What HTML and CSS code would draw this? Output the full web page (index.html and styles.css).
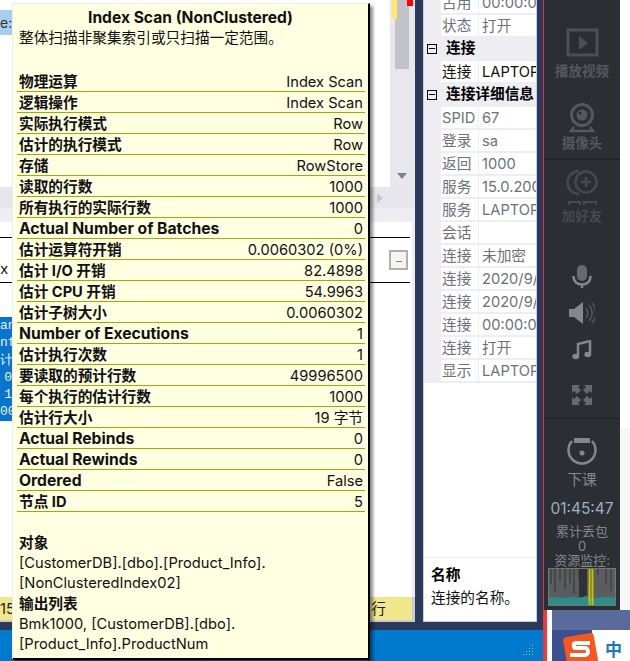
FILE: index.html
```html
<!DOCTYPE html>
<html lang="zh">
<head>
<meta charset="utf-8">
<title>Index Scan</title>
<link rel="stylesheet" href="styles.css">
</head>
<body>
<div class="desk">
  <main class="editor">
    <div class="code">
      <div class="code-main"><div class="tab-stub">e:</div></div>
      <div class="vscroll"><i class="mark-y"></i><i class="mark-r"></i><i class="thumb"></i><i class="arrow-d"></i></div>
    </div>
    <div class="hscroll"><i class="arrow-r"></i></div>
    <div class="gap-band"></div>
    <div class="results">
      <div class="res-head"><span class="res-x">x</span><span class="min-btn"><i></i></span></div>
      <div class="res-spacer"></div>
      <div class="sel"><div>an</div><div>nf</div><div>计</div><div class="r">0</div><div class="r">1</div><div>00</div></div>
    </div>
    <div class="status-y"><span>15</span><span>行</span></div>
    <div class="navy-band"></div>
    <div class="blue-band"></div>
  </main>

  <aside class="props">
    <div class="props-box">
      <div class="grid">
        <div class="pl">占用</div><div class="pv">00:00:00</div>
        <div class="pl">状态</div><div class="pv">打开</div>
        <div class="ph"><i class="tog"></i>连接</div>
        <div class="pl dark">连接</div><div class="pv dark">LAPTOP-</div>
        <div class="ph"><i class="tog"></i>连接详细信息</div>
        <div class="pl">SPID</div><div class="pv">67</div>
        <div class="pl">登录</div><div class="pv">sa</div>
        <div class="pl">返回</div><div class="pv">1000</div>
        <div class="pl">服务</div><div class="pv">15.0.2000</div>
        <div class="pl">服务</div><div class="pv">LAPTOP-</div>
        <div class="pl">会话</div><div class="pv"></div>
        <div class="pl">连接</div><div class="pv">未加密</div>
        <div class="pl">连接</div><div class="pv">2020/9/</div>
        <div class="pl">连接</div><div class="pv">2020/9/</div>
        <div class="pl">连接</div><div class="pv">00:00:00</div>
        <div class="pl">连接</div><div class="pv">打开</div>
        <div class="pl">显示</div><div class="pv">LAPTOP-</div>
      </div>
      <div class="desc"><b>名称</b><span>连接的名称。</span></div>
    </div>
    <div class="navy-band"></div>
    <div class="blue-band"><svg class="grip" width="12" height="12" viewBox="0 0 12 12"><path d="M9 1h1v1H9zM6 4h1v1H6zM9 4h1v1H9zM3 7h1v1H3zM6 7h1v1H6zM9 7h1v1H9zM0 10h1v1H0zM3 10h1v1H3zM6 10h1v1H6zM9 10h1v1H9z" fill="#9cc4e6"/></svg></div>
  </aside>
  <div class="red-line"></div>

  <div class="right">
    <nav class="side">
      <div class="s-top"></div>
      <div class="s-item s-play">
        <svg width="33" height="30" viewBox="0 0 33 30"><rect x="2" y="2" width="29" height="25" fill="none" stroke="#4c4f53" stroke-width="3"/><path d="M13 8l9 7-9 7z" fill="#4c4f53"/></svg>
        <span>播放视频</span>
      </div>
      <div class="s-item s-cam">
        <svg width="28" height="30" viewBox="0 0 28 30"><circle cx="14" cy="12" r="10.500" fill="none" stroke="#55585c" stroke-width="3"/><circle cx="14" cy="12" r="5.500" fill="#55585c"/><circle cx="12" cy="10" r="1.500" fill="#2b2e33"/><path d="M6 24l-3 4h22l-3-4" fill="none" stroke="#55585c" stroke-width="2.500"/></svg>
        <span>摄像头</span>
      </div>
      <div class="s-item s-add">
        <svg width="34" height="38" viewBox="0 0 34 38"><path d="M14 2a11.500 11.500 0 0 0 0 23" fill="none" stroke="#46494d" stroke-width="2.500"/><circle cx="21" cy="13" r="10.500" fill="none" stroke="#46494d" stroke-width="2.500"/><path d="M21 8v10M16 13h10" stroke="#46494d" stroke-width="2.500"/><path d="M4 36v-3h11v3M19 36v-3h12v3" fill="none" stroke="#46494d" stroke-width="2"/></svg>
        <span>加好友</span>
      </div>
      <div class="s-tools">
        <svg class="t-mic" width="20" height="24" viewBox="0 0 20 24"><rect x="5" y="0" width="10" height="16" rx="5" fill="#66696d"/><path d="M1.500 11c0 6 4 8.500 8.500 8.500s8.500-2.500 8.500-8.500M10 19v4" fill="none" stroke="#85888b" stroke-width="2.500"/></svg>
        <svg class="t-spk" width="26" height="24" viewBox="0 0 26 24"><path d="M0 8h5l9-7v22l-9-7H0z" fill="#85888b"/><path d="M17 7c2 3 2 7 0 10M20 4c4 5 4 11 0 16M23 2c5 6 5 14 0 20" fill="none" stroke="#55585c" stroke-width="1.500"/></svg>
        <svg class="t-mus" width="20" height="20" viewBox="0 0 20 20"><path d="M6 15V4l12-3v12" fill="none" stroke="#85888b" stroke-width="2.500"/><ellipse cx="3.800" cy="16.500" rx="3.500" ry="2.800" fill="#85888b"/><ellipse cx="15.800" cy="14.500" rx="3.500" ry="2.800" fill="#85888b"/></svg>
        <svg class="t-full" width="20" height="20" viewBox="0 0 20 20" fill="#66696d"><path d="M0 0h8L6 2l3 3-4 4-3-3-2 2zM20 0v8l-2-2-3 3-4-4 3-3-2-2zM0 20v-8l2 2 3-3 4 4-3 3 2 2zM20 20h-8l2-2-3-3 4-4 3 3 2-2z"/></svg>
      </div>
      <div class="s-end">
        <svg width="30" height="30" viewBox="0 0 30 30"><path d="M7 1h16v5H7z" fill="#85888b"/><path d="M25 4a13.500 13.500 0 1 1-20 0" fill="none" stroke="#85888b" stroke-width="2.500"/><circle cx="15" cy="16" r="2.500" fill="#85888b"/></svg>
        <span class="s-class">下课</span>
        <span class="s-time">01:45:47</span>
        <span class="s-small">累计丢包</span>
        <span class="s-small">0</span>
        <span class="s-small">资源监控:</span>
        <svg class="chart" width="68" height="38" viewBox="0 0 68 38">
          <rect width="68" height="38" fill="#5a5c5e"/>
          <path d="M3 1v15M7 1v22M12 1v12M17 1v20M22 1v14M26 1v25M31 1v10M36 1v24M41 1v18M45 1v10M50 1v6M58 1v14M63 1v22" stroke="#3f4144" stroke-width="1.500"/>
          <rect x="31" y="1" width="8" height="28" fill="#2f3134"/>
          <path d="M0 38V30l6-1 8 1 9-1 9 1 6-2 10 2 9-1 11 1v8z" fill="#2f8c8c"/>
          <path d="M41.500 1v36M44.500 1v36" stroke="#c8c000" stroke-width="2"/>
          <rect x=".5" y=".5" width="67" height="37" fill="none" stroke="#73767a"/>
        </svg>
      </div>
    </nav>
    <div class="tray">
      <div class="tray-blank"></div>
      <div class="tray-ime">
        <svg width="36" height="34" viewBox="0 0 36 34"><rect x="2" y="2" width="31" height="30" rx="3" transform="rotate(-10 17 17)" fill="#f4581f"/><path d="M27 10H13c-3 0-3 5 0 5h9c4 0 4 7 0 7H7" fill="none" stroke="#fff" stroke-width="4"/></svg>
        <span>中</span>
      </div>
    </div>
  </div>
</div>

<section class="tip">
  <h1>Index Scan (NonClustered)</h1>
  <p class="tip-desc">整体扫描非聚集索引或只扫描一定范围。</p>
  <dl class="tip-rows">
    <div><dt>物理运算</dt><dd>Index Scan</dd></div>
    <div><dt>逻辑操作</dt><dd>Index Scan</dd></div>
    <div><dt>实际执行模式</dt><dd>Row</dd></div>
    <div><dt>估计的执行模式</dt><dd>Row</dd></div>
    <div><dt>存储</dt><dd>RowStore</dd></div>
    <div><dt>读取的行数</dt><dd>1000</dd></div>
    <div><dt>所有执行的实际行数</dt><dd>1000</dd></div>
    <div><dt class="lat">Actual Number of Batches</dt><dd>0</dd></div>
    <div><dt>估计运算符开销</dt><dd>0.0060302 (0%)</dd></div>
    <div><dt>估计 I/O 开销</dt><dd>82.4898</dd></div>
    <div><dt>估计 CPU 开销</dt><dd>54.9963</dd></div>
    <div><dt>估计子树大小</dt><dd>0.0060302</dd></div>
    <div><dt class="lat">Number of Executions</dt><dd>1</dd></div>
    <div><dt>估计执行次数</dt><dd>1</dd></div>
    <div><dt>要读取的预计行数</dt><dd>49996500</dd></div>
    <div><dt>每个执行的估计行数</dt><dd>1000</dd></div>
    <div><dt>估计行大小</dt><dd>19 字节</dd></div>
    <div><dt class="lat">Actual Rebinds</dt><dd>0</dd></div>
    <div><dt class="lat">Actual Rewinds</dt><dd>0</dd></div>
    <div><dt class="lat">Ordered</dt><dd>False</dd></div>
    <div><dt>节点 ID</dt><dd>5</dd></div>
  </dl>
  <h2>对象</h2>
  <p class="tip-block">[CustomerDB].[dbo].[Product_Info].<br>[NonClusteredIndex02]</p>
  <h2 class="tip-h2b">输出列表</h2>
  <p class="tip-block">Bmk1000, [CustomerDB].[dbo].<br>[Product_Info].ProductNum</p>
</section>
</body>
</html>
```

FILE: styles.css
```css
* { box-sizing: border-box; }
html, body { margin: 0; padding: 0; }
body {
  width: 630px; height: 661px; overflow: hidden; position: relative; background: #fff;
  font-family: Inter, "Noto Sans CJK SC", sans-serif;
}
i { display: block; }
.desk { display: flex; height: 661px; }

/* editor */
.editor { width: 415px; display: flex; flex-direction: column; flex: none; }
.code { height: 187px; display: flex; }
.code-main { flex: 1; padding-top: 10px; }
.tab-stub { width: 12px; height: 25px; background: #a9cdf0; font-size: 14px; line-height: 25px; color: #333; overflow: hidden; white-space: nowrap; }
.vscroll { width: 25px; background: #e8e8ec; position: relative; }
.thumb { position: absolute; left: 5px; top: 0; width: 14px; height: 69px; background: #c2c3c9; }
.mark-y { position: absolute; left: 2px; top: 0; width: 5px; height: 19px; background: #ffe86b; z-index: 1; }
.mark-r { position: absolute; left: 17px; top: 0; width: 6px; height: 6px; background: #f00; z-index: 1; }
.arrow-d { position: absolute; left: 7px; top: 173px; border: 5.500px solid transparent; border-top: 6px solid #7f8088; border-bottom: 0; }
.hscroll { height: 21px; background: #e6e6ec; padding: 6px 0 0 377px; }
.arrow-r { border: 5px solid transparent; border-left: 6px solid #c4c4cc; border-right: 0; }
.gap-band { height: 14px; background: #eeeef2; }
.results { flex: 1; background: #fff; border-right: 3px solid #eeeef2; display: flex; flex-direction: column; }
.res-head { margin-top: 15px; height: 46px; border-top: 1px solid #000; border-bottom: 1px solid #000; display: flex; align-items: flex-start; justify-content: space-between; padding-right: 2px; margin-right: 2px; }
.res-x { font-family: "Liberation Mono", monospace; font-size: 14px; line-height: 20px; margin-top: 22px; }
.min-btn { width: 19px; height: 20px; margin-top: 12px; border: 2px solid #b0b0b0; background: #f4f4f4; display: flex; align-items: center; justify-content: center; }
.min-btn i { width: 6px; height: 1px; margin-top: 3px; background: #a87a50; }
.res-spacer { height: 34px; }
.sel { width: 12px; height: 104px; background: #0a74cc; color: #e8f2fb; font-family: "Liberation Mono", monospace; font-size: 13px; line-height: 17.300px; overflow: hidden; white-space: nowrap; }
.sel .r { text-align: right; }
.status-y { height: 25px; background: #f0e68c; font-size: 14.670px; line-height: 25px; display: flex; justify-content: space-between; padding-right: 26px; border-right: 3px solid #c9c9cf; border-bottom: 2px solid #c9c9cf; color: #222; overflow: hidden; }
.navy-band { height: 8px; background: #2b3a5b; flex: none; }
.blue-band { height: 31px; background: #007acc; flex: none; }

/* properties */
.props { width: 128px; flex: none; display: flex; flex-direction: column; position: relative; background: #2b3a5b; }
.props-box { flex: 1; margin: 0 6px 0 8px; background: #fff; border: solid #c9cde0; border-width: 0 1px 1px; display: flex; flex-direction: column; overflow: hidden; }
.grid { display: grid; grid-template-columns: 55px 58px; grid-auto-rows: 23px; background: #eeeef2; width: 113px; margin-top: -8px; font-size: 14.670px; line-height: 23px; height: 391px; flex: none; white-space: nowrap; }
.pl { margin-left: 17px; background: #fff; color: #70707a; padding-left: 1px; overflow: hidden; border-bottom: 2px solid #eeeef2; border-right: 1px solid #eeeef2; }
.pv { background: #fff; color: #70707a; padding-left: 3px; overflow: hidden; border-bottom: 2px solid #eeeef2; }
.dark { color: #111; }
.ph { grid-column: 1 / 3; display: flex; align-items: center; font-weight: 700; color: #000; padding-left: 3px; padding-bottom: 2px; white-space: nowrap; overflow: hidden; }
.tog { width: 10px; height: 10px; margin-right: 9px; flex: none; border: 1px solid #000; background: linear-gradient(#000, #000) center / 6px 1px no-repeat; }
.desc { flex: 1; display: flex; flex-direction: column; justify-content: flex-end; padding: 0 0 11px 7px; font-size: 14.670px; line-height: 23px; }
.desc { background: linear-gradient(#eeeef2, #eeeef2) 0 calc(100% - 63px) / 100% 1px no-repeat; color: #111; }
.desc b { color: #000; }
.blue-band { position: relative; }
.grip { position: absolute; right: 8px; bottom: 5px; }
.red-line { width: 1px; flex: none; background: #e8383c; }

/* sidebar */
.right { flex: 1; display: flex; flex-direction: column; min-width: 0; background: linear-gradient(#fff 428px, #f7f7f7 428px); }
.side { width: 76px; height: 610px; flex: none; background: #2b2e33; display: flex; flex-direction: column; align-items: center; color: #55585c; font-size: 13.500px; }
.s-top { height: 28px; flex: none; }
.s-item { display: flex; flex-direction: column; align-items: center; flex: none; }
.s-item span { line-height: 18px; font-weight: 700; }
.s-play svg { margin-bottom: 4px; }
.s-cam { width: 100%; margin-top: 23px; height: 56px; }
.s-cam svg { margin-bottom: 1px; }
.s-add { width: 100%; border-top: 1px solid #1f2125; padding-top: 9px; }
.s-add span { color: #46494d; }
.s-tools { margin-top: 40px; width: 100%; height: 154px; flex: none; display: flex; flex-direction: column; align-items: center; border-bottom: 1px solid #1f2125; }
.t-spk { margin-top: 12px; }
.t-mus { margin-top: 15px; }
.t-full { margin-top: 25px; }
.s-end { flex: 1; display: flex; flex-direction: column; align-items: center; padding-top: 18px; color: #85888b; }
.s-class { font-size: 14.670px; line-height: 20px; margin-top: 3px; }
.s-time { font-size: 15.500px; line-height: 20px; margin-top: 9px; color: #9db0c2; white-space: nowrap; }
.s-small { font-size: 13px; line-height: 14.500px; white-space: nowrap; }
.s-time + .s-small { margin-top: 5px; }
.chart { flex: none; }

/* tray */
.tray { flex: 1; display: flex; flex-direction: column; background: #5a6a9a; border-left: 3px solid #ee3b40; }
.tray-blank { height: 20px; flex: none; background: linear-gradient(90deg, #fff 5px, transparent 5px); }
.tray-ime { flex: 1; background: linear-gradient(90deg, #fff 5px, #3e4f8f 5px, #3e4f8f 45px, #fff 45px); display: flex; align-items: center; gap: 6px; padding-left: 16px; }
.tray-ime svg { flex: none; margin-top: 3px; }
.tray-ime span { color: #1b78c8; font-size: 17px; font-weight: 700; }

/* tooltip */
.tip {
  position: absolute; left: 12px; top: 3px; width: 358px; height: 657px; padding: 4px 4px 0 4px;
  background: #ffffe1; color: #111; border-right: 2px solid #000; border-bottom: 2px solid #000; border-top: 1px solid #eee; border-left: 1px solid #eee;
  box-shadow: 3px 3px 3px rgba(0,0,0,.45); font-size: 14.670px;
}
.tip h1 { margin: 0; font-size: 15.600px; line-height: 20px; font-weight: 700; text-align: center; color: #111; }
.tip-desc { margin: 0 0 22px 2px; line-height: 21px; }
.tip-rows { margin: 0; width: 348px; }
.tip-rows div { display: flex; justify-content: space-between; height: 21px; line-height: 22px; border-bottom: 1px solid #a8a800; padding: 0 2px 0 2px; }
.tip-rows dt { font-weight: 700; }
.tip-rows dt.lat { font-size: 15.700px; }
.tip-rows dd { margin: 0; }
.tip h2 { margin: 21px 0 0 2px; font-size: 14.670px; line-height: 20px; font-weight: 700; }
.tip h2.tip-h2b { margin-top: 1px; }
.tip-block { margin: 0 0 0 2px; line-height: 20px; }
```
